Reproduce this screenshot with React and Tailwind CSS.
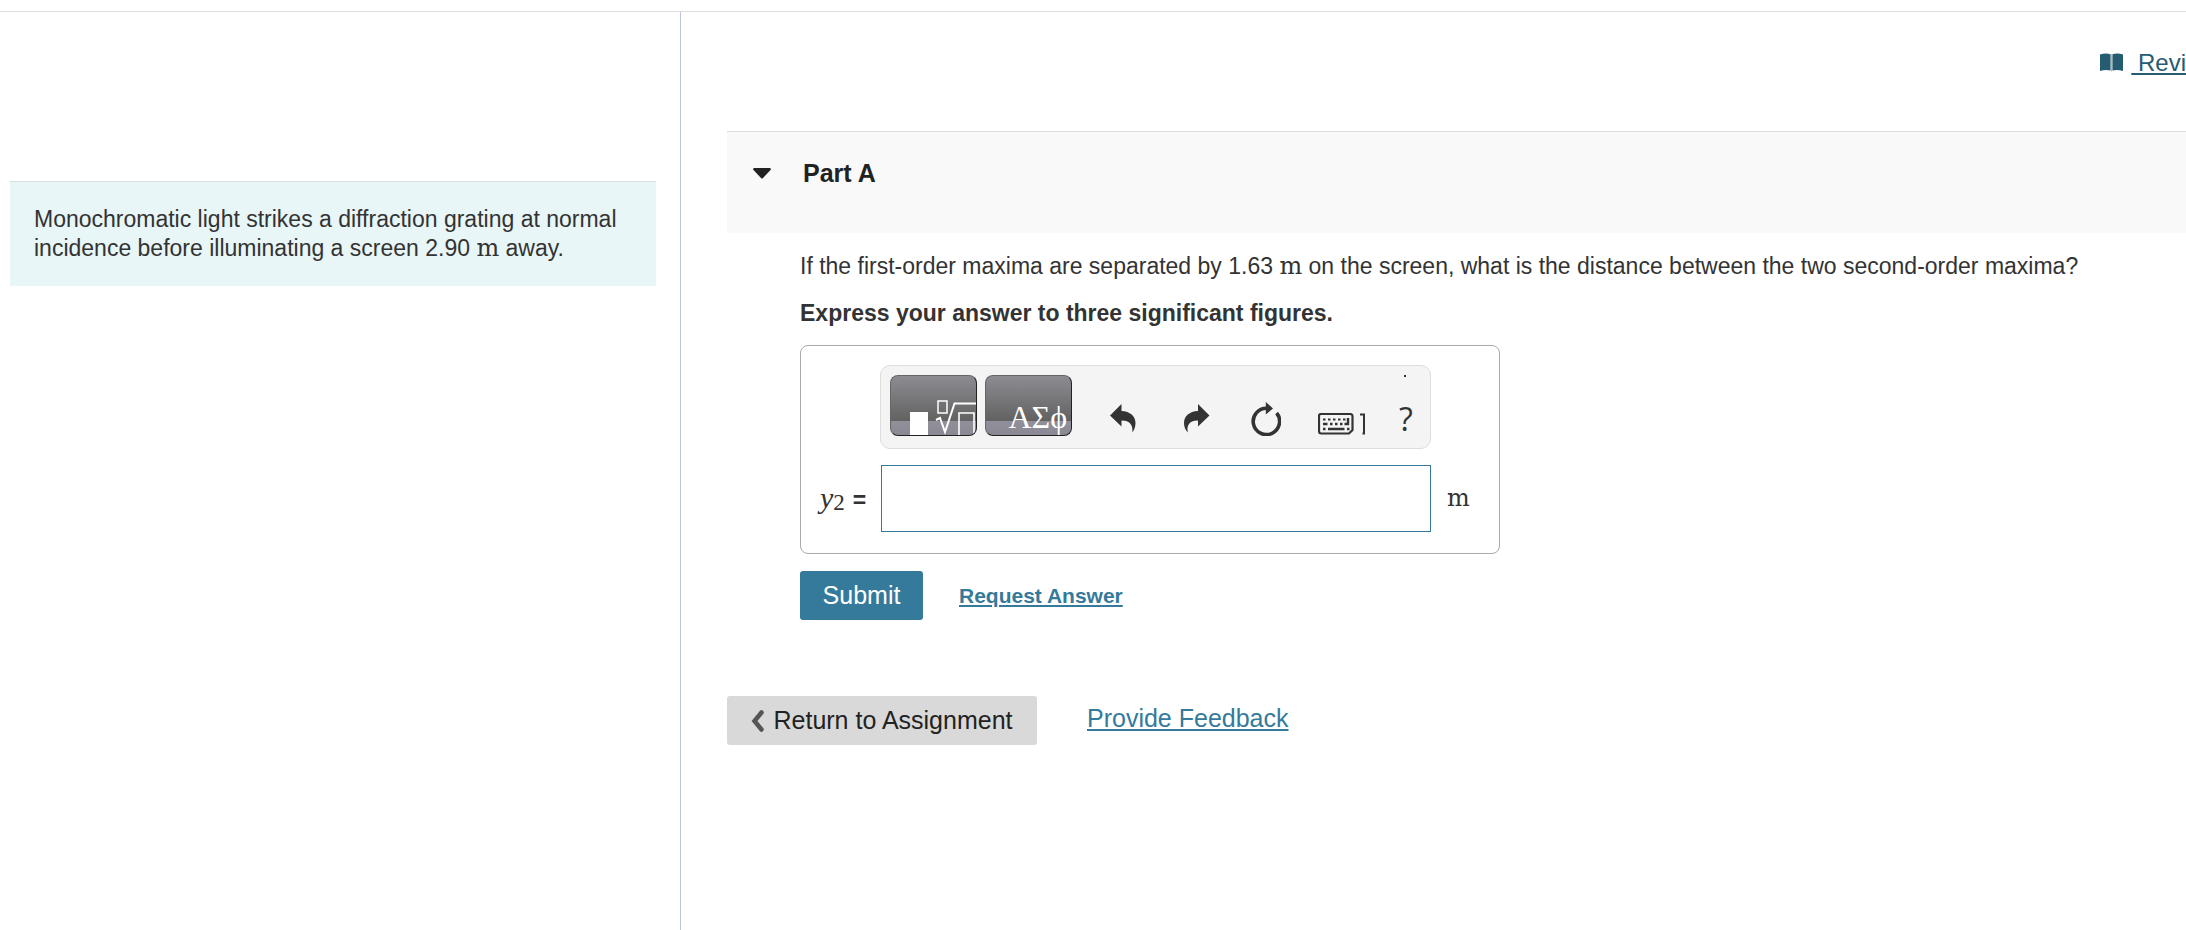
import { useState } from "react";

const Unit = ({ children }) => (
  <span className="font-['DejaVu_Serif',serif] text-2xl leading-none">{children}</span>
);

const BookIcon = () => (
  <svg viewBox="0 0 23 19" width="23" height="19" fill="currentColor" aria-hidden="true">
    <path d="M0 1.500Q5.500-.5 10.600 1.200V17.500Q5.500 16.300 0 18Z" />
    <path d="M12.400 1.200Q17.500-.5 23 1.500V18Q17.500 16.300 12.400 17.500Z" />
    <path d="M11.500 1V18.500" stroke="currentColor" strokeOpacity=".4" />
  </svg>
);

const UndoIcon = () => (
  <svg viewBox="0 0 26 30" width="26" height="30" fill="currentColor" aria-hidden="true">
    <path d="M0 11.5L11.500 0V7C20 7.500 25.500 12 25.500 19C25.500 23 24.200 26 22.300 28.500C23 23 21.500 16.500 11.500 16.500V22.500Z" />
  </svg>
);

const RedoIcon = () => (
  <svg viewBox="0 0 26 30" width="26" height="30" fill="currentColor" aria-hidden="true">
    <path d="M25.500 11.500L14 0V7C5.500 7.500 0 12 0 19C0 23 1.300 26 4 28.500C2.500 23 4 16.500 14 16.500V22.500Z" />
  </svg>
);

const ResetIcon = () => (
  <svg viewBox="0 0 30 34" width="30" height="34" aria-hidden="true">
    <path d="M16 6.200A13.200 13.200 0 1 0 25.600 11" fill="none" stroke="currentColor" strokeWidth="3.600" />
    <path d="M14.800 0L22 6.500L14.800 12.500Z" fill="currentColor" />
  </svg>
);

const KeyboardIcon = () => (
  <svg viewBox="0 0 48 22" width="48" height="22" fill="none" stroke="currentColor" aria-hidden="true">
    <path d="M3 1H32Q34.500 1 34.500 3V17L31 20.500H3Q1 20.500 1 18V3Q1 1 3 1Z" strokeWidth="2.200" />
    <path d="M5 6.500H28" strokeWidth="2.200" strokeDasharray="2.500 2.500" />
    <path d="M5 11H9.500M12 11H14.500M17 11H19.500M22 11H24.500M26.500 11H31M30 5V12" strokeWidth="2.400" />
    <path d="M5 16H7.500M10 16H26.500M29 16H31.500" strokeWidth="2.400" />
    <path d="M42 1.500H46V20.500H44.500" strokeWidth="2" />
  </svg>
);

const TemplateIcon = () => (
  <svg viewBox="0 0 66 35" width="66" height="35" fill="none" stroke="white" aria-hidden="true">
    <path d="M0 12H18V35H0Z" fill="white" stroke="none" />
    <path d="M28 1H37V13H28Z" strokeWidth="1.500" />
    <path d="M26 20L30 18L35 32L44.500 3.500H66" strokeWidth="2" />
    <path d="M49 35V13H64V35" strokeWidth="1.600" />
  </svg>
);

const CaretIcon = () => (
  <svg viewBox="0 0 18 11" width="18" height="11" fill="currentColor" aria-hidden="true">
    <path d="M1 0H17Q18.500 1 17.500 2L10 10Q9 11 8 10L.5 2Q-.5 1 1 0Z" />
  </svg>
);

const ChevronIcon = () => (
  <svg viewBox="0 0 14 22" width="14" height="22" fill="none" stroke="#555" strokeWidth="4.500" aria-hidden="true">
    <path d="M10.500 2.500L3.500 11L10.500 19.500" strokeLinecap="round" />
  </svg>
);

const paletteButton =
  "flex h-[61px] w-[87px] overflow-hidden rounded-lg border border-t-[#666] border-l-[#666] border-r-[#222] border-b-[#222] bg-[linear-gradient(#8d8c92_0%,#626262_76%,#918f99_76%,#8a8892_100%)] text-white";

const App = () => {
  const [answer, setAnswer] = useState("");
  const [open, setOpen] = useState(true);

  return (
    <div className="flex min-h-screen flex-col overflow-x-hidden bg-white pt-[11px] font-['Liberation_Sans',Arial,sans-serif] text-[23px] leading-[29px] text-[#333]">
      <div className="flex grow border-t border-[#ddd]">
        {/* PROBLEM INTRODUCTION */}
        <aside className="w-[681px] shrink-0 border-r border-[#b9c6dc] pt-[169px] pr-6 pl-[10px]">
          <div className="border-t border-[#ddd] bg-[#e8f6f7] px-6 py-[23px]">
            Monochromatic light strikes a diffraction grating at normal incidence before illuminating a
            screen 2.90 <Unit>m</Unit> away.
          </div>
        </aside>

        <main className="min-w-0 grow pl-[46px]">
          {/* TOP LINKS */}
          <div className="flex h-[119px] items-start justify-end gap-2 pt-[35px] text-2xl text-[#255c71]">
            <span className="pt-[6px]">
              <BookIcon />
            </span>
            <a href="#review" className="whitespace-pre underline decoration-2 underline-offset-2">
              {" Revi"}
            </a>
          </div>

          {/* PART A */}
          <section>
            <div className="h-[102px] border-t border-[#ddd] bg-[#f9f9f9] pt-[27px] pl-[26px]">
              <button
                type="button"
                aria-expanded={open}
                onClick={() => setOpen(!open)}
                className="flex items-center gap-8 text-[25px] font-bold text-[#222]"
              >
                <CaretIcon />
                Part A
              </button>
            </div>

            {open && (
              <div className="pt-[19px] pl-[73px]">
                <p>
                  If the first-order maxima are separated by 1.63 <Unit>m</Unit> on the screen, what is the
                  distance between the two second-order maxima?
                </p>
                <p className="mt-[18px] font-bold">Express your answer to three significant figures.</p>

                {/* ANSWER BOX */}
                <div className="mt-[17px] w-[700px] rounded-lg border border-[#aaa] pt-[19px] pb-[21px]">
                  <div className="ml-[79px] flex h-[84px] w-[551px] rounded-[10px] border border-[#ddd] bg-[#f4f4f4] pt-[9px] pl-[9px]">
                    <button type="button" aria-label="Templates" className={`${paletteButton} items-end pl-[19px]`}>
                      <TemplateIcon />
                    </button>
                    <button
                      type="button"
                      aria-label="Symbols"
                      className={`${paletteButton} ml-2 items-end justify-end pr-1 font-['Liberation_Serif',serif] text-[32px] leading-9`}
                    >
                      ΑΣϕ
                    </button>
                    <div className="ml-[14px] flex h-[61px] items-stretch">
                      <button type="button" aria-label="Undo" className="flex w-[74px] items-center justify-center pt-[26px]">
                        <UndoIcon />
                      </button>
                      <button type="button" aria-label="Redo" className="flex w-[74px] items-center justify-center pt-[26px]">
                        <RedoIcon />
                      </button>
                      <button type="button" aria-label="Reset" className="flex w-[64px] items-center justify-center pt-[26px]">
                        <ResetIcon />
                      </button>
                      <button type="button" aria-label="Keyboard shortcuts" className="flex w-[88px] items-center justify-center pt-9">
                        <KeyboardIcon />
                      </button>
                      <button
                        type="button"
                        aria-label="Help"
                        className="relative flex w-10 items-center justify-center pt-[26px] font-['Open_Sans',sans-serif] text-[32px]"
                      >
                        <span className="absolute top-0 left-[18px] size-[2px] bg-[#333]" />?
                      </button>
                    </div>
                  </div>

                  <div className="mt-4 flex items-center">
                    <label htmlFor="answer" className="flex w-20 items-baseline pl-[19px] font-['Liberation_Serif',serif] text-[30px]">
                      <i>y</i>
                      <sub className="bottom-[-2px] text-[23px]">2</sub>
                      <span className="ml-2 font-['Liberation_Sans',sans-serif] text-[23px] font-bold">=</span>
                    </label>
                    <input
                      id="answer"
                      type="text"
                      value={answer}
                      onChange={(e) => setAnswer(e.target.value)}
                      className="h-[67px] w-[550px] border border-[#357a9b] bg-white px-3 text-2xl outline-none"
                    />
                    <span className="ml-4">
                      <Unit>m</Unit>
                    </span>
                  </div>
                </div>

                <div className="mt-[17px] flex items-center">
                  <button type="button" className="h-[49px] w-[123px] rounded-[3px] bg-[#357a9b] text-[25px] text-white">
                    Submit
                  </button>
                  <a href="#request" className="ml-9 text-[21px] font-bold text-[#357a9b] underline decoration-2 underline-offset-2">
                    Request Answer
                  </a>
                </div>
              </div>
            )}
          </section>

          {/* FOOTER ACTIONS */}
          <div className="mt-[76px] flex items-start text-[25px]">
            <button type="button" className="flex h-[49px] w-[310px] items-center justify-center gap-2 rounded-[3px] bg-[#d9d9d9] text-[#222]">
              <ChevronIcon />
              Return to Assignment
            </button>
            <a href="#feedback" className="mt-2 ml-[50px] text-[#357a9b] underline decoration-2 underline-offset-2">
              Provide Feedback
            </a>
          </div>
        </main>
      </div>
    </div>
  );
};

export default App;
